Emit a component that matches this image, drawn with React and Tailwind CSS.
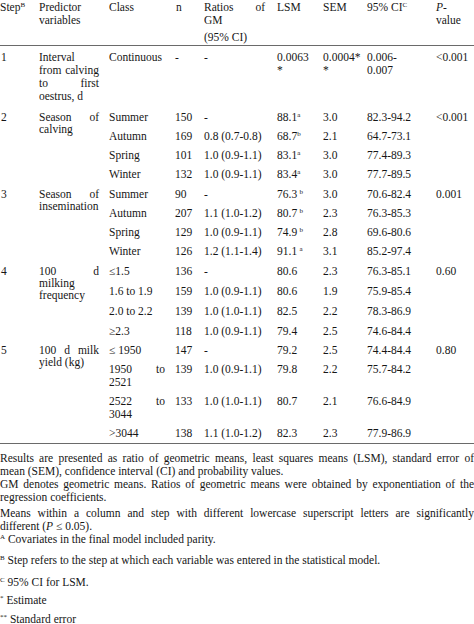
import React from "react";

const subCols = "grid grid-cols-[66px_29px_73px_46px_44px_69px_38px]";

const Sup = ({ children }) => (
  <sup className="text-[7px] top-[-4px]">{children}</sup>
);

// a line that is stretched to the full width, as in the printed page
const Full = ({ children }) => (
  <span className="block text-justify [text-align-last:justify]">{children}</span>
);

const groups = [
  {
    step: "2",
    predictor: "Season of calving",
    rows: [
      ["Summer", "150", "-", "88.1", "a", "3.0", "82.3-94.2", "<0.001"],
      ["Autumn", "169", "0.8 (0.7-0.8)", "68.7", "b", "2.1", "64.7-73.1", ""],
      ["Spring", "101", "1.0 (0.9-1.1)", "83.1", "a", "3.0", "77.4-89.3", ""],
      ["Winter", "132", "1.0 (0.9-1.1)", "83.4", "a", "3.0", "77.7-89.5", ""],
    ],
    pad: "py-[3px]",
    top: "",
  },
  {
    step: "3",
    predictor: "Season of insemination",
    spaced: true,
    rows: [
      ["Summer", "90", "-", "76.3", "b", "3.0", "70.6-82.4", "0.001"],
      ["Autumn", "207", "1.1 (1.0-1.2)", "80.7", "b", "2.3", "76.3-85.3", ""],
      ["Spring", "129", "1.0 (0.9-1.1)", "74.9", "b", "2.8", "69.6-80.6", ""],
      ["Winter", "126", "1.2 (1.1-1.4)", "91.1", "a", "3.1", "85.2-97.4", ""],
    ],
    pad: "py-[3px]",
    top: "mt-[1px]",
  },
  {
    step: "4",
    predictor: "100 d milking frequency",
    rows: [
      ["≤1.5", "136", "-", "80.6", "", "2.3", "76.3-85.1", "0.60"],
      ["1.6 to 1.9", "159", "1.0 (0.9-1.1)", "80.6", "", "1.9", "75.9-85.4", ""],
      ["2.0 to 2.2", "139", "1.0 (1.0-1.1)", "82.5", "", "2.2", "78.3-86.9", ""],
      ["≥2.3", "118", "1.0 (0.9-1.1)", "79.4", "", "2.5", "74.6-84.4", ""],
    ],
    pad: "py-[3.5px]",
    top: "mt-[0.5px]",
  },
  {
    step: "5",
    predictor: "100 d milk yield (kg)",
    rows: [
      ["≤ 1950", "147", "-", "79.2", "", "2.5", "74.4-84.4", "0.80"],
      ["1950 to 2521", "139", "1.0 (0.9-1.1)", "79.8", "", "2.2", "75.7-84.2", ""],
      ["2522 to 3044", "133", "1.0 (1.0-1.1)", "80.7", "", "2.1", "76.6-84.9", ""],
      [">3044", "138", "1.1 (1.0-1.2)", "82.3", "", "2.3", "77.9-86.9", ""],
    ],
    pad: "py-[3px]",
    top: "",
  },
];

const notes = [
  { mark: "A", text: "Covariates in the final model included parity.", cls: "mt-[0.5px]" },
  { mark: "B", text: "Step refers to the step at which each variable was entered in the statistical model.", cls: "mt-[8.5px]" },
  { mark: "C", text: "95% CI for LSM.", cls: "mt-[9.5px]" },
  { mark: "*", text: "Estimate", cls: "mt-[5.5px]" },
  { mark: "**", text: "Standard error", cls: "mt-[6.5px]" },
];

function Group({ g }) {
  return (
    <div className={`flex ${g.top}`}>
      <div className={`w-[39px] pl-[1px] ${g.pad}`}>{g.step}</div>
      <div className={`w-[70px] ${g.pad}`}>
        <p className="w-[60px] text-justify leading-[12px]">{g.predictor}</p>
      </div>
      <div className="flex-1">
        {g.rows.map((r, i) => (
          <div key={i} className={`${subCols} ${g.pad}`}>
            <div>
              <p className="w-[56px] text-justify">{r[0]}</p>
            </div>
            <div>{r[1]}</div>
            <div>{r[2]}</div>
            <div>
              {r[3]}
              {r[4] && (
                <>
                  {g.spaced ? "\u2009" : ""}
                  <Sup>{r[4]}</Sup>
                </>
              )}
            </div>
            <div>{r[5]}</div>
            <div>{r[6]}</div>
            <div>{r[7]}</div>
          </div>
        ))}
      </div>
    </div>
  );
}

export default function App() {
  return (
    <div className="w-[474px] h-[624px] overflow-hidden bg-white font-['Liberation_Serif',serif] text-[11.5px] leading-[13px] text-[#161616]">
      {/* header */}
      <div className="grid grid-cols-[39px_70px_66px_29px_73px_46px_44px_69px_38px] pt-[0.5px] pb-[1.5px]">
        <div>
          Step<Sup>B</Sup>
        </div>
        <div>
          <p className="w-[60px]">Predictor variables</p>
        </div>
        <div>Class</div>
        <div className="pl-[1px]">n</div>
        <div>
          <p className="w-[61px] text-justify">Ratios of GM</p>
          <p className="mt-[4px]">(95% CI)</p>
        </div>
        <div>LSM</div>
        <div>SEM</div>
        <div>
          95% CI<Sup>C</Sup>
        </div>
        <div>
          <i>P</i>-<br />value
        </div>
      </div>
      <div className="border-t-[1.5px] border-[#6a6a6a]" />

      {/* step 1 */}
      <div className="flex pt-[4.5px] pb-[5px]">
        <div className="w-[39px] pl-[1px]">1</div>
        <div className="w-[70px]">
          <p className="w-[60px] text-justify">Interval from calving to first oestrus, d</p>
        </div>
        <div className={`flex-1 ${subCols}`}>
          <div>Continuous</div>
          <div>-</div>
          <div>-</div>
          <div>
            0.0063
            <br />*
          </div>
          <div>
            0.0004*
            <br />*
          </div>
          <div>
            0.006-
            <br />
            0.007
          </div>
          <div>&lt;0.001</div>
        </div>
      </div>

      {groups.map((g) => (
        <Group key={g.step} g={g} />
      ))}

      <div className="border-t-[1.5px] border-[#6a6a6a]" />

      {/* notes */}
      <div className="leading-[12.5px]">
        <p className="mt-[8px]">
          <Full>Results are presented as ratio of geometric means, least squares means (LSM), standard error of</Full>
          <span className="block">mean (SEM), confidence interval (CI) and probability values.</span>
        </p>
        <p className="mt-[1px]">
          <Full>GM denotes geometric means. Ratios of geometric means were obtained by exponentiation of the</Full>
          <span className="block">regression coefficients.</span>
        </p>
        <p className="mt-[4px]">
          <Full>Means within a column and step with different lowercase superscript letters are significantly</Full>
          <span className="block">
            different (<i>P</i> ≤ 0.05).
          </span>
        </p>
        {notes.map((n) => (
          <p key={n.mark} className={n.cls}>
            <Sup>{n.mark}</Sup> {n.text}
          </p>
        ))}
      </div>
    </div>
  );
}
